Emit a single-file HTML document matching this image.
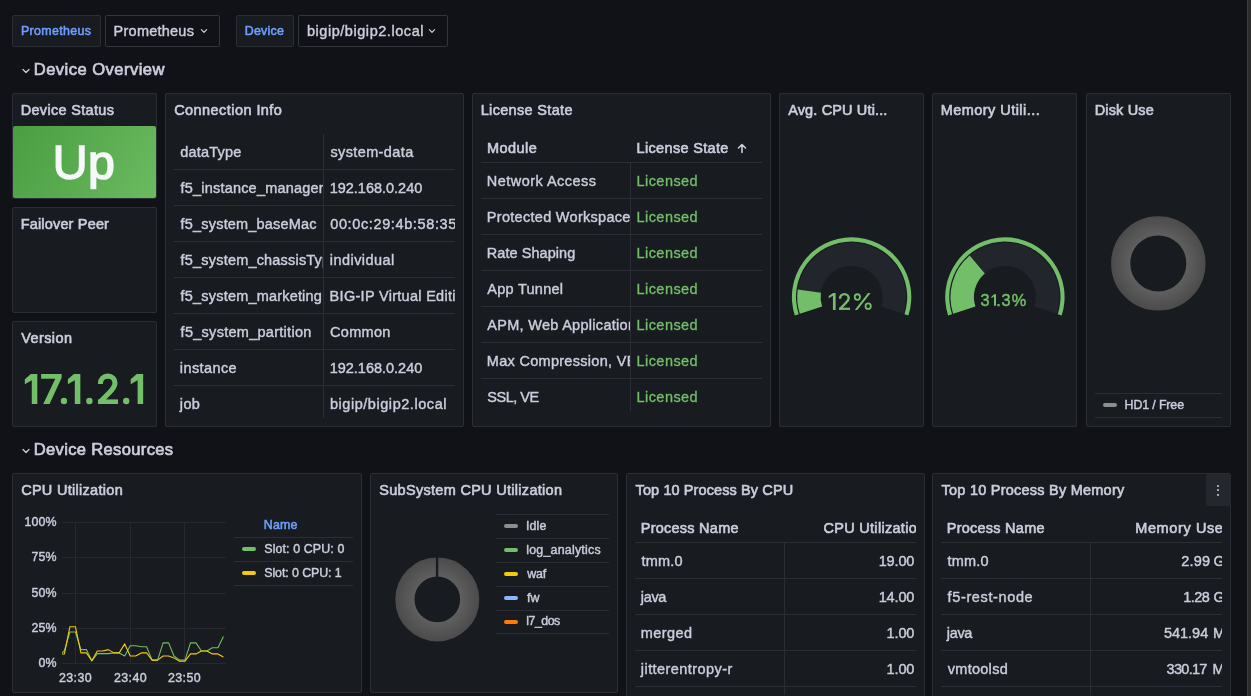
<!DOCTYPE html>
<html><head><meta charset="utf-8"><title>Dashboard</title><style>
html,body{margin:0;padding:0;background:#111217;}body{width:1251px;height:696px;overflow:hidden;position:relative;font-family:"Liberation Sans",sans-serif;color:#ccccdc;}
.a{position:absolute;}.t{position:absolute;white-space:nowrap;line-height:1;}
</style></head><body>
<div class="a" style="left:12px;top:15px;width:89px;height:32px;background:#181b1f;border:1px solid #2c2e35;box-sizing:border-box;border-radius:2px;"></div>
<div class="a" style="left:105px;top:15px;width:115px;height:32px;background:#111217;border:1px solid #33353d;box-sizing:border-box;border-radius:2px;"></div>
<div class="a" style="left:236px;top:15px;width:58px;height:32px;background:#181b1f;border:1px solid #2c2e35;box-sizing:border-box;border-radius:2px;"></div>
<div class="a" style="left:298px;top:15px;width:150px;height:32px;background:#111217;border:1px solid #33353d;box-sizing:border-box;border-radius:2px;"></div>
<svg class="a" style="left:198px;top:24.8px" width="12" height="12" viewBox="-6 -6 12 12"><path d="M-2.6 -1.3 L0 1.3 L2.6 -1.3" fill="none" stroke="#ccccdc" stroke-width="1.2" stroke-linecap="round" stroke-linejoin="round"/></svg>
<svg class="a" style="left:426px;top:24.8px" width="12" height="12" viewBox="-6 -6 12 12"><path d="M-2.6 -1.3 L0 1.3 L2.6 -1.3" fill="none" stroke="#ccccdc" stroke-width="1.2" stroke-linecap="round" stroke-linejoin="round"/></svg>
<svg class="a" style="left:20px;top:64.5px" width="12" height="12" viewBox="-6 -6 12 12"><path d="M-3.0 -1.5 L0 1.5 L3.0 -1.5" fill="none" stroke="#ccccdc" stroke-width="1.3" stroke-linecap="round" stroke-linejoin="round"/></svg>
<svg class="a" style="left:20px;top:444.5px" width="12" height="12" viewBox="-6 -6 12 12"><path d="M-3.0 -1.5 L0 1.5 L3.0 -1.5" fill="none" stroke="#ccccdc" stroke-width="1.3" stroke-linecap="round" stroke-linejoin="round"/></svg>
<div class="a" style="left:12px;top:93px;width:145px;height:106px;background:#181b1f;border:1px solid #2c2e35;box-sizing:border-box;border-radius:2px;"></div>
<div class="a" style="left:13px;top:126px;width:143.4px;height:72px;background:linear-gradient(120deg,#4a9e41,#6bba60);border-radius:2px"></div>
<div class="a" style="left:12px;top:207px;width:145px;height:106px;background:#181b1f;border:1px solid #2c2e35;box-sizing:border-box;border-radius:2px;"></div>
<div class="a" style="left:12px;top:321px;width:145px;height:106px;background:#181b1f;border:1px solid #2c2e35;box-sizing:border-box;border-radius:2px;"></div>
<svg class="a" style="left:0;top:0" width="170" height="430" fill="#73bf69"><polygon transform="translate(0,0)" points="30.86,374.03 37.32,374.03 37.32,404.09 31.77,404.09 31.77,380.37 24.83,384.29 24.83,379.16"/><polygon transform="translate(43.03,0)" points="30.86,374.03 37.32,374.03 37.32,404.09 31.77,404.09 31.77,380.37 24.83,384.29 24.83,379.16"/><polygon transform="translate(105.85,0)" points="30.86,374.03 37.32,374.03 37.32,404.09 31.77,404.09 31.77,380.37 24.83,384.29 24.83,379.16"/><polygon points="41.12,374.03 61.64,374.03 61.64,377.66 49.57,404.09 43.23,404.09 55.3,378.86 41.12,378.86"/><circle cx="63.95" cy="401.0" r="3.2"/><circle cx="89.4" cy="401.0" r="3.2"/><circle cx="126.2" cy="401.0" r="3.2"/><g transform="translate(90,368) scale(0.06035)"><clipPath id="c2"><rect x="128" y="80" width="340" height="518"/></clipPath><g clip-path="url(#c2)"><path d="M171 266 C171 185 222 135 295 135 C368 135 414 183 414 248 C414 303 385 340 335 392 L150 580" fill="none" stroke="#73bf69" stroke-width="85"/><rect x="133" y="520" width="332" height="78"/></g></g></svg>
<div class="a" style="left:165px;top:93px;width:299px;height:334px;background:#181b1f;border:1px solid #2c2e35;box-sizing:border-box;border-radius:2px;"></div>
<div class="a" style="left:174px;top:169px;width:281px;height:1px;background:#2c2e35"></div>
<div class="a" style="left:174px;top:205px;width:281px;height:1px;background:#2c2e35"></div>
<div class="a" style="left:174px;top:241px;width:281px;height:1px;background:#2c2e35"></div>
<div class="a" style="left:174px;top:277px;width:281px;height:1px;background:#2c2e35"></div>
<div class="a" style="left:174px;top:313px;width:281px;height:1px;background:#2c2e35"></div>
<div class="a" style="left:174px;top:349px;width:281px;height:1px;background:#2c2e35"></div>
<div class="a" style="left:174px;top:385px;width:281px;height:1px;background:#2c2e35"></div>
<div class="a" style="left:323px;top:134px;width:1px;height:284px;background:#2c2e35"></div>
<div class="a" style="left:472px;top:93px;width:299px;height:334px;background:#181b1f;border:1px solid #2c2e35;box-sizing:border-box;border-radius:2px;"></div>
<svg class="a" style="left:736px;top:141px" width="12" height="14" viewBox="0 0 12 14"><path d="M6 11.4 V3.6 M2.5 7 L6 3.5 L9.5 7" fill="none" stroke="#ccccdc" stroke-width="1.6" stroke-linecap="round" stroke-linejoin="round"/></svg>
<div class="a" style="left:481px;top:162px;width:281px;height:1px;background:#2c2e35"></div>
<div class="a" style="left:481px;top:198px;width:281px;height:1px;background:#2c2e35"></div>
<div class="a" style="left:481px;top:234px;width:281px;height:1px;background:#2c2e35"></div>
<div class="a" style="left:481px;top:270px;width:281px;height:1px;background:#2c2e35"></div>
<div class="a" style="left:481px;top:306px;width:281px;height:1px;background:#2c2e35"></div>
<div class="a" style="left:481px;top:342px;width:281px;height:1px;background:#2c2e35"></div>
<div class="a" style="left:481px;top:378px;width:281px;height:1px;background:#2c2e35"></div>
<div class="a" style="left:630px;top:162px;width:1px;height:249px;background:#2c2e35"></div>
<div class="a" style="left:779px;top:93px;width:145px;height:334px;background:#181b1f;border:1px solid #2c2e35;box-sizing:border-box;border-radius:2px;"></div>
<svg class="a" style="left:0;top:0" width="1251" height="696"><path d="M794.82 315.45 A59.7 59.7 0 1 1 908.38 315.45 L904.48 314.18 A55.6 55.6 0 1 0 798.72 314.18 Z" fill="#73bf69"/><path d="M799.86 313.81 A54.4 54.4 0 1 1 903.34 313.81 L881.08 306.58 A31 31 0 1 0 822.12 306.58 Z" fill="#22252b"/><path d="M799.86 313.81 A54.4 54.4 0 0 1 797.72 289.50 L820.90 292.73 A31 31 0 0 0 822.12 306.58 Z" fill="#73bf69"/></svg>
<svg class="a" style="left:0;top:0" width="1251" height="696"><g transform="translate(820,280) scale(0.05747)" fill="#73bf69"><polygon points="228,228 272,228 272,520 225,520 225,275 152,318 152,280"/></g></svg>
<svg class="a" style="left:0;top:0" width="1251" height="696"><g transform="translate(834.553,289.809) scale(0.03357)"><clipPath id="ct36"><rect x="128" y="80" width="340" height="518"/></clipPath><g clip-path="url(#ct36)"><path d="M164 266 C164 185 222 129 295 129 C368 129 421 183 421 248 C421 303 385 340 335 392 L150 580" fill="none" stroke="#73bf69" stroke-width="72"/><rect x="133" y="531.76" width="332" height="66.24000000000001" fill="#73bf69"/></g></g><g transform="translate(820,280) scale(0.05747)" fill="none" stroke="#73bf69" stroke-width="31"><ellipse cx="650" cy="297" rx="46" ry="49"/><ellipse cx="838" cy="455" rx="46" ry="49"/><clipPath id="cs"><rect x="560" y="228" width="380" height="292"/></clipPath><line x1="863" y1="218" x2="622" y2="530" stroke-width="34" clip-path="url(#cs)"/></g></svg>
<div class="a" style="left:932px;top:93px;width:145px;height:334px;background:#181b1f;border:1px solid #2c2e35;box-sizing:border-box;border-radius:2px;"></div>
<svg class="a" style="left:0;top:0" width="1251" height="696"><path d="M948.12 315.45 A59.7 59.7 0 1 1 1061.68 315.45 L1057.78 314.18 A55.6 55.6 0 1 0 952.02 314.18 Z" fill="#73bf69"/><path d="M953.16 313.81 A54.4 54.4 0 1 1 1056.64 313.81 L1034.38 306.58 A31 31 0 1 0 975.42 306.58 Z" fill="#22252b"/><path d="M953.16 313.81 A54.4 54.4 0 0 1 969.65 255.57 L984.81 273.39 A31 31 0 0 0 975.42 306.58 Z" fill="#73bf69"/></svg>
<svg class="a" style="left:0;top:0" width="1251" height="696"><g transform="translate(973,280) scale(0.05747)" fill="#73bf69"><polygon points="368,248 400,248 400,450 365,450 365,287 320,318 320,290"/></g></svg>
<div class="a" style="left:1086px;top:93px;width:145px;height:334px;background:#181b1f;border:1px solid #2c2e35;box-sizing:border-box;border-radius:2px;"></div>
<svg class="a" style="left:0;top:0" width="1251" height="696"><defs><radialGradient id="gd" gradientUnits="userSpaceOnUse" cx="1158.3" cy="263.4" r="47.2"><stop offset="0.59" stop-color="#5f5f5f"/><stop offset="1" stop-color="#4b4b4b"/></radialGradient></defs><circle cx="1158.3" cy="263.4" r="37.6" fill="none" stroke="url(#gd)" stroke-width="19.2"/></svg>
<div class="a" style="left:1095px;top:393px;width:127px;height:1px;background:#2c2e35"></div>
<div class="a" style="left:1095px;top:417px;width:127px;height:1px;background:#2c2e35"></div>
<div class="a" style="left:1102.8px;top:403px;width:14px;height:4px;background:#8e8e8e;border-radius:2px;"></div>
<div class="a" style="left:12px;top:473px;width:350px;height:220px;background:#181b1f;border:1px solid #2c2e35;box-sizing:border-box;border-radius:2px;"></div>
<div class="a" style="left:370px;top:473px;width:248px;height:220px;background:#181b1f;border:1px solid #2c2e35;box-sizing:border-box;border-radius:2px;"></div>
<div class="a" style="left:626px;top:473px;width:299px;height:240px;background:#181b1f;border:1px solid #2c2e35;box-sizing:border-box;border-radius:2px;"></div>
<div class="a" style="left:932px;top:473px;width:299px;height:240px;background:#181b1f;border:1px solid #2c2e35;box-sizing:border-box;border-radius:2px;"></div>
<div class="a" style="left:62px;top:522px;width:164px;height:1px;background:#27292f"></div>
<div class="a" style="left:62px;top:557px;width:164px;height:1px;background:#27292f"></div>
<div class="a" style="left:62px;top:593px;width:164px;height:1px;background:#27292f"></div>
<div class="a" style="left:62px;top:628px;width:164px;height:1px;background:#27292f"></div>
<div class="a" style="left:62px;top:663px;width:164px;height:1px;background:#27292f"></div>
<div class="a" style="left:75px;top:522px;width:1px;height:141px;background:#27292f"></div>
<div class="a" style="left:130px;top:522px;width:1px;height:141px;background:#27292f"></div>
<div class="a" style="left:184px;top:522px;width:1px;height:141px;background:#27292f"></div>
<svg class="a" style="left:62px;top:515px" width="164" height="155" viewBox="62 515 164 155"><polyline points="59.0,655.6 64.4,650.6 69.9,632.0 75.4,632.0 80.9,649.6 86.4,649.6 91.8,660.8 97.3,653.6 102.8,653.6 108.3,653.6 113.8,652.9 119.2,652.9 124.7,656.0 130.2,645.7 135.7,645.7 141.2,646.7 146.6,646.7 152.1,660.1 157.6,660.1 163.1,642.9 168.6,642.9 174.0,656.0 179.5,660.1 185.0,660.1 190.5,642.9 196.0,642.9 201.4,651.0 206.9,651.0 212.4,647.8 217.9,647.8 223.4,636.5" fill="none" stroke="#73bf69" stroke-width="1.1" stroke-linejoin="round"/><polyline points="59.0,654.1 64.4,653.9 69.9,626.7 75.4,626.7 80.9,652.9 86.4,652.9 91.8,660.8 97.3,651.0 102.8,651.0 108.3,649.6 113.8,652.9 119.2,652.9 124.7,643.9 130.2,656.0 135.7,656.0 141.2,652.9 146.6,652.9 152.1,660.1 157.6,660.1 163.1,656.0 168.6,656.0 174.0,657.9 179.5,661.2 185.0,661.2 190.5,653.9 196.0,653.9 201.4,651.0 206.9,651.0 212.4,653.9 217.9,653.9 223.4,657.1" fill="none" stroke="#f2cc0c" stroke-width="1.1" stroke-linejoin="round"/></svg>
<div class="a" style="left:234px;top:537px;width:119px;height:1px;background:#2c2e35"></div>
<div class="a" style="left:242px;top:547px;width:14px;height:4px;background:#73bf69;border-radius:2px;"></div>
<div class="a" style="left:234px;top:561px;width:119px;height:1px;background:#2c2e35"></div>
<div class="a" style="left:242px;top:571px;width:14px;height:4px;background:#f2cc0c;border-radius:2px;"></div>
<div class="a" style="left:234px;top:585px;width:119px;height:1px;background:#2c2e35"></div>
<svg class="a" style="left:0;top:0" width="1251" height="696"><defs><radialGradient id="gs" gradientUnits="userSpaceOnUse" cx="437.3" cy="599.4" r="42"><stop offset="0.54" stop-color="#5f5f5f"/><stop offset="1" stop-color="#4b4b4b"/></radialGradient></defs><circle cx="437.3" cy="599.4" r="32.4" fill="none" stroke="url(#gs)" stroke-width="19.2"/><line x1="437.1" y1="556" x2="437.1" y2="577.3" stroke="#181b1f" stroke-width="2.4" stroke-linecap="round"/></svg>
<div class="a" style="left:496px;top:514px;width:113px;height:1px;background:#2c2e35"></div>
<div class="a" style="left:504px;top:524px;width:14px;height:4px;background:#8e8e8e;border-radius:2px;"></div>
<div class="a" style="left:496px;top:538px;width:113px;height:1px;background:#2c2e35"></div>
<div class="a" style="left:504px;top:548px;width:14px;height:4px;background:#73bf69;border-radius:2px;"></div>
<div class="a" style="left:496px;top:562px;width:113px;height:1px;background:#2c2e35"></div>
<div class="a" style="left:504px;top:572px;width:14px;height:4px;background:#f2cc0c;border-radius:2px;"></div>
<div class="a" style="left:496px;top:586px;width:113px;height:1px;background:#2c2e35"></div>
<div class="a" style="left:504px;top:596px;width:14px;height:4px;background:#8ab8ff;border-radius:2px;"></div>
<div class="a" style="left:496px;top:610px;width:113px;height:1px;background:#2c2e35"></div>
<div class="a" style="left:504px;top:620px;width:14px;height:4px;background:#ff780a;border-radius:2px;"></div>
<div class="a" style="left:496px;top:633px;width:113px;height:1px;background:#2c2e35"></div>
<div class="a" style="left:635px;top:542px;width:281px;height:1px;background:#2c2e35"></div>
<div class="a" style="left:635px;top:578px;width:281px;height:1px;background:#2c2e35"></div>
<div class="a" style="left:635px;top:614px;width:281px;height:1px;background:#2c2e35"></div>
<div class="a" style="left:635px;top:650px;width:281px;height:1px;background:#2c2e35"></div>
<div class="a" style="left:635px;top:686px;width:281px;height:1px;background:#2c2e35"></div>
<div class="a" style="left:784px;top:542px;width:1px;height:153px;background:#2c2e35"></div>
<div class="a" style="left:941px;top:542px;width:281px;height:1px;background:#2c2e35"></div>
<div class="a" style="left:941px;top:578px;width:281px;height:1px;background:#2c2e35"></div>
<div class="a" style="left:941px;top:614px;width:281px;height:1px;background:#2c2e35"></div>
<div class="a" style="left:941px;top:650px;width:281px;height:1px;background:#2c2e35"></div>
<div class="a" style="left:941px;top:686px;width:281px;height:1px;background:#2c2e35"></div>
<div class="a" style="left:1090px;top:542px;width:1px;height:153px;background:#2c2e35"></div>
<div class="a" style="left:1206px;top:474px;width:25px;height:32px;background:#24272d;border-radius:2px;"></div>
<div class="a" style="left:1217px;top:484.5px;width:2.2px;height:2.2px;border-radius:1.1px;background:#ccccdc"></div>
<div class="a" style="left:1217px;top:489.0px;width:2.2px;height:2.2px;border-radius:1.1px;background:#ccccdc"></div>
<div class="a" style="left:1217px;top:493.5px;width:2.2px;height:2.2px;border-radius:1.1px;background:#ccccdc"></div>
<div class="a" style="left:1247px;top:0;width:1px;height:696px;background:#3d3d3d"></div>
<div class="a" style="left:1248px;top:0;width:3px;height:696px;background:#2c2c2c"></div>
<div class="a" style="left:0;top:0;width:1251px;height:696px;will-change:transform">
<span class="t" style="left:20.96px;top:24.79px;font-size:12.42px;color:#6e9fff;-webkit-text-stroke:0.55px #6e9fff;letter-spacing:0.336px;">Prometheus</span>
<span class="t" style="left:113.62px;top:23.75px;font-size:14.49px;color:#ccccdc;-webkit-text-stroke:0.42px #ccccdc;letter-spacing:0.244px;">Prometheus</span>
<span class="t" style="left:244.66px;top:24.79px;font-size:12.42px;color:#6e9fff;-webkit-text-stroke:0.55px #6e9fff;letter-spacing:0.280px;">Device</span>
<span class="t" style="left:306.88px;top:23.75px;font-size:14.49px;color:#ccccdc;-webkit-text-stroke:0.42px #ccccdc;letter-spacing:0.558px;">bigip/bigip2.local</span>
<span class="t" style="left:33.79px;top:62.12px;font-size:16.56px;color:#ccccdc;-webkit-text-stroke:0.7px #ccccdc;letter-spacing:0.463px;">Device Overview</span>
<span class="t" style="left:33.79px;top:442.12px;font-size:16.56px;color:#ccccdc;-webkit-text-stroke:0.7px #ccccdc;letter-spacing:0.333px;">Device Resources</span>
<span class="t" style="left:20.72px;top:102.75px;font-size:14.49px;color:#ccccdc;-webkit-text-stroke:0.62px #ccccdc;letter-spacing:0.319px;">Device Status</span>
<span class="t" style="left:52.48px;top:138.00px;font-size:48.9px;color:#f7f8fa;-webkit-text-stroke:1.3px #f7f8fa;">U</span>
<span class="t" style="left:88.09px;top:138.00px;font-size:48.2px;color:#f7f8fa;-webkit-text-stroke:1.6px #f7f8fa;clip-path:inset(0 -5px -3px -5px);">p</span>
<span class="t" style="left:20.72px;top:216.75px;font-size:14.49px;color:#ccccdc;-webkit-text-stroke:0.62px #ccccdc;letter-spacing:0.173px;">Failover Peer</span>
<span class="t" style="left:21.15px;top:330.75px;font-size:14.49px;color:#ccccdc;-webkit-text-stroke:0.62px #ccccdc;letter-spacing:0.429px;">Version</span>
<span class="t" style="left:174.17px;top:102.75px;font-size:14.49px;color:#ccccdc;-webkit-text-stroke:0.62px #ccccdc;letter-spacing:0.447px;">Connection Info</span>
<div class="a" style="left:0;top:0;height:696px;overflow:hidden;width:323.00px"><span class="t" style="left:180.20px;top:145.06px;font-size:14.49px;color:#ccccdc;-webkit-text-stroke:0.42px #ccccdc;letter-spacing:0.206px;">dataType</span></div>
<div class="a" style="left:0;top:0;height:696px;overflow:hidden;width:455.00px"><span class="t" style="left:330.41px;top:145.06px;font-size:14.49px;color:#ccccdc;-webkit-text-stroke:0.42px #ccccdc;letter-spacing:0.390px;">system-data</span></div>
<div class="a" style="left:0;top:0;height:696px;overflow:hidden;width:323.00px"><span class="t" style="left:180.60px;top:181.06px;font-size:14.49px;color:#ccccdc;-webkit-text-stroke:0.42px #ccccdc;letter-spacing:0.200px;">f5_instance_manager</span></div>
<div class="a" style="left:0;top:0;height:696px;overflow:hidden;width:455.00px"><span class="t" style="left:329.71px;top:181.06px;font-size:14.49px;color:#ccccdc;-webkit-text-stroke:0.42px #ccccdc;letter-spacing:-0.007px;">192.168.0.240</span></div>
<div class="a" style="left:0;top:0;height:696px;overflow:hidden;width:323.00px"><span class="t" style="left:180.60px;top:217.06px;font-size:14.49px;color:#ccccdc;-webkit-text-stroke:0.42px #ccccdc;letter-spacing:0.196px;">f5_system_baseMac</span></div>
<div class="a" style="left:0;top:0;height:696px;overflow:hidden;width:455.00px"><span class="t" style="left:330.24px;top:217.06px;font-size:14.49px;color:#ccccdc;-webkit-text-stroke:0.42px #ccccdc;letter-spacing:0.630px;">00:0c:29:4b:58:35</span></div>
<div class="a" style="left:0;top:0;height:696px;overflow:hidden;width:323.00px"><span class="t" style="left:180.60px;top:253.06px;font-size:14.49px;color:#ccccdc;-webkit-text-stroke:0.42px #ccccdc;letter-spacing:0.200px;">f5_system_chassisType</span></div>
<div class="a" style="left:0;top:0;height:696px;overflow:hidden;width:455.00px"><span class="t" style="left:329.84px;top:253.06px;font-size:14.49px;color:#ccccdc;-webkit-text-stroke:0.42px #ccccdc;letter-spacing:0.447px;">individual</span></div>
<div class="a" style="left:0;top:0;height:696px;overflow:hidden;width:323.00px"><span class="t" style="left:180.60px;top:289.06px;font-size:14.49px;color:#ccccdc;-webkit-text-stroke:0.42px #ccccdc;letter-spacing:0.200px;">f5_system_marketingName</span></div>
<div class="a" style="left:0;top:0;height:696px;overflow:hidden;width:455.00px"><span class="t" style="left:329.62px;top:289.06px;font-size:14.49px;color:#ccccdc;-webkit-text-stroke:0.42px #ccccdc;letter-spacing:0.300px;">BIG-IP Virtual Edition</span></div>
<div class="a" style="left:0;top:0;height:696px;overflow:hidden;width:323.00px"><span class="t" style="left:180.60px;top:325.06px;font-size:14.49px;color:#ccccdc;-webkit-text-stroke:0.42px #ccccdc;letter-spacing:0.285px;">f5_system_partition</span></div>
<div class="a" style="left:0;top:0;height:696px;overflow:hidden;width:455.00px"><span class="t" style="left:330.07px;top:325.06px;font-size:14.49px;color:#ccccdc;-webkit-text-stroke:0.42px #ccccdc;letter-spacing:0.320px;">Common</span></div>
<div class="a" style="left:0;top:0;height:696px;overflow:hidden;width:323.00px"><span class="t" style="left:179.84px;top:361.06px;font-size:14.49px;color:#ccccdc;-webkit-text-stroke:0.42px #ccccdc;letter-spacing:0.406px;">instance</span></div>
<div class="a" style="left:0;top:0;height:696px;overflow:hidden;width:455.00px"><span class="t" style="left:329.71px;top:361.06px;font-size:14.49px;color:#ccccdc;-webkit-text-stroke:0.42px #ccccdc;letter-spacing:-0.007px;">192.168.0.240</span></div>
<div class="a" style="left:0;top:0;height:696px;overflow:hidden;width:323.00px"><span class="t" style="left:179.86px;top:397.06px;font-size:14.49px;color:#ccccdc;-webkit-text-stroke:0.42px #ccccdc;letter-spacing:0.303px;">job</span></div>
<div class="a" style="left:0;top:0;height:696px;overflow:hidden;width:455.00px"><span class="t" style="left:329.88px;top:397.06px;font-size:14.49px;color:#ccccdc;-webkit-text-stroke:0.42px #ccccdc;letter-spacing:0.558px;">bigip/bigip2.local</span></div>
<span class="t" style="left:480.72px;top:102.75px;font-size:14.49px;color:#ccccdc;-webkit-text-stroke:0.62px #ccccdc;letter-spacing:0.329px;">License State</span>
<span class="t" style="left:486.92px;top:140.75px;font-size:14.49px;color:#ccccdc;-webkit-text-stroke:0.62px #ccccdc;letter-spacing:0.481px;">Module</span>
<span class="t" style="left:636.62px;top:140.75px;font-size:14.49px;color:#ccccdc;-webkit-text-stroke:0.62px #ccccdc;letter-spacing:0.329px;">License State</span>
<div class="a" style="left:0;top:0;height:696px;overflow:hidden;width:630.00px"><span class="t" style="left:486.82px;top:174.06px;font-size:14.49px;color:#ccccdc;-webkit-text-stroke:0.42px #ccccdc;letter-spacing:0.466px;">Network Access</span></div>
<span class="t" style="left:636.46px;top:174.06px;font-size:14.49px;color:#73bf69;-webkit-text-stroke:0.3px #73bf69;letter-spacing:0.463px;">Licensed</span>
<div class="a" style="left:0;top:0;height:696px;overflow:hidden;width:630.00px"><span class="t" style="left:486.82px;top:210.06px;font-size:14.49px;color:#ccccdc;-webkit-text-stroke:0.42px #ccccdc;letter-spacing:0.300px;">Protected Workspace</span></div>
<span class="t" style="left:636.46px;top:210.06px;font-size:14.49px;color:#73bf69;-webkit-text-stroke:0.3px #73bf69;letter-spacing:0.463px;">Licensed</span>
<div class="a" style="left:0;top:0;height:696px;overflow:hidden;width:630.00px"><span class="t" style="left:486.82px;top:246.06px;font-size:14.49px;color:#ccccdc;-webkit-text-stroke:0.42px #ccccdc;letter-spacing:0.057px;">Rate Shaping</span></div>
<span class="t" style="left:636.46px;top:246.06px;font-size:14.49px;color:#73bf69;-webkit-text-stroke:0.3px #73bf69;letter-spacing:0.463px;">Licensed</span>
<div class="a" style="left:0;top:0;height:696px;overflow:hidden;width:630.00px"><span class="t" style="left:487.28px;top:282.06px;font-size:14.49px;color:#ccccdc;-webkit-text-stroke:0.42px #ccccdc;letter-spacing:0.281px;">App Tunnel</span></div>
<span class="t" style="left:636.46px;top:282.06px;font-size:14.49px;color:#73bf69;-webkit-text-stroke:0.3px #73bf69;letter-spacing:0.463px;">Licensed</span>
<div class="a" style="left:0;top:0;height:696px;overflow:hidden;width:630.00px"><span class="t" style="left:487.28px;top:318.06px;font-size:14.49px;color:#ccccdc;-webkit-text-stroke:0.42px #ccccdc;letter-spacing:0.300px;">APM, Web Application</span></div>
<span class="t" style="left:636.46px;top:318.06px;font-size:14.49px;color:#73bf69;-webkit-text-stroke:0.3px #73bf69;letter-spacing:0.463px;">Licensed</span>
<div class="a" style="left:0;top:0;height:696px;overflow:hidden;width:630.00px"><span class="t" style="left:486.82px;top:354.06px;font-size:14.49px;color:#ccccdc;-webkit-text-stroke:0.42px #ccccdc;letter-spacing:0.300px;">Max Compression, VE</span></div>
<span class="t" style="left:636.46px;top:354.06px;font-size:14.49px;color:#73bf69;-webkit-text-stroke:0.3px #73bf69;letter-spacing:0.463px;">Licensed</span>
<div class="a" style="left:0;top:0;height:696px;overflow:hidden;width:630.00px"><span class="t" style="left:487.35px;top:390.06px;font-size:14.49px;color:#ccccdc;-webkit-text-stroke:0.42px #ccccdc;letter-spacing:-0.481px;">SSL, VE</span></div>
<span class="t" style="left:636.46px;top:390.06px;font-size:14.49px;color:#73bf69;-webkit-text-stroke:0.3px #73bf69;letter-spacing:0.463px;">Licensed</span>
<span class="t" style="left:788.18px;top:102.75px;font-size:14.49px;color:#ccccdc;-webkit-text-stroke:0.62px #ccccdc;letter-spacing:0.150px;">Avg. CPU Uti...</span>
<span class="t" style="left:940.72px;top:102.75px;font-size:14.49px;color:#ccccdc;-webkit-text-stroke:0.62px #ccccdc;letter-spacing:0.461px;">Memory Utili...</span>
<span class="t" style="left:980.40px;top:292.15px;font-size:16.3px;color:#73bf69;-webkit-text-stroke:0.45px #73bf69;">3</span>
<span class="t" style="left:996.34px;top:292.15px;font-size:16.3px;color:#73bf69;-webkit-text-stroke:0.45px #73bf69;">.</span>
<span class="t" style="left:1001.40px;top:292.15px;font-size:16.3px;color:#73bf69;-webkit-text-stroke:0.45px #73bf69;">3</span>
<span class="t" style="left:1011.74px;top:292.15px;font-size:16.3px;color:#73bf69;-webkit-text-stroke:0.45px #73bf69;">%</span>
<span class="t" style="left:1094.72px;top:102.75px;font-size:14.49px;color:#ccccdc;-webkit-text-stroke:0.62px #ccccdc;letter-spacing:0.153px;">Disk Use</span>
<span class="t" style="left:1124.59px;top:398.79px;font-size:12.42px;color:#ccccdc;-webkit-text-stroke:0.42px #ccccdc;letter-spacing:-0.135px;">HD1 / Free</span>
<span class="t" style="left:21.17px;top:482.75px;font-size:14.49px;color:#ccccdc;-webkit-text-stroke:0.62px #ccccdc;letter-spacing:0.297px;">CPU Utilization</span>
<span class="t" style="left:379.25px;top:482.75px;font-size:14.49px;color:#ccccdc;-webkit-text-stroke:0.62px #ccccdc;letter-spacing:0.304px;">SubSystem CPU Utilization</span>
<span class="t" style="left:635.58px;top:482.75px;font-size:14.49px;color:#ccccdc;-webkit-text-stroke:0.62px #ccccdc;letter-spacing:0.108px;">Top 10 Process By CPU</span>
<span class="t" style="left:941.58px;top:482.75px;font-size:14.49px;color:#ccccdc;-webkit-text-stroke:0.62px #ccccdc;letter-spacing:0.241px;">Top 10 Process By Memory</span>
<span class="t" style="left:24.50px;top:516.09px;font-size:12.42px;color:#ccccdc;-webkit-text-stroke:0.42px #ccccdc;letter-spacing:0.100px;">100%</span>
<span class="t" style="left:31.50px;top:551.49px;font-size:12.42px;color:#ccccdc;-webkit-text-stroke:0.42px #ccccdc;letter-spacing:0.100px;">75%</span>
<span class="t" style="left:31.50px;top:586.99px;font-size:12.42px;color:#ccccdc;-webkit-text-stroke:0.42px #ccccdc;letter-spacing:0.100px;">50%</span>
<span class="t" style="left:31.50px;top:622.19px;font-size:12.42px;color:#ccccdc;-webkit-text-stroke:0.42px #ccccdc;letter-spacing:0.100px;">25%</span>
<span class="t" style="left:38.50px;top:657.39px;font-size:12.42px;color:#ccccdc;-webkit-text-stroke:0.42px #ccccdc;letter-spacing:0.100px;">0%</span>
<span class="t" style="left:59.11px;top:672.19px;font-size:12.42px;color:#ccccdc;-webkit-text-stroke:0.42px #ccccdc;letter-spacing:0.350px;">23:30</span>
<span class="t" style="left:114.11px;top:672.19px;font-size:12.42px;color:#ccccdc;-webkit-text-stroke:0.42px #ccccdc;letter-spacing:0.350px;">23:40</span>
<span class="t" style="left:168.11px;top:672.19px;font-size:12.42px;color:#ccccdc;-webkit-text-stroke:0.42px #ccccdc;letter-spacing:0.350px;">23:50</span>
<span class="t" style="left:263.86px;top:519.29px;font-size:12.42px;color:#6e9fff;-webkit-text-stroke:0.55px #6e9fff;letter-spacing:0.176px;">Name</span>
<span class="t" style="left:264.25px;top:542.79px;font-size:12.42px;color:#ccccdc;-webkit-text-stroke:0.42px #ccccdc;letter-spacing:0.110px;">Slot: 0 CPU: 0</span>
<span class="t" style="left:264.25px;top:566.79px;font-size:12.42px;color:#ccccdc;-webkit-text-stroke:0.42px #ccccdc;letter-spacing:-0.089px;">Slot: 0 CPU: 1</span>
<span class="t" style="left:525.96px;top:520.00px;font-size:12.42px;color:#ccccdc;-webkit-text-stroke:0.42px #ccccdc;letter-spacing:0.158px;">Idle</span>
<span class="t" style="left:526.27px;top:544.00px;font-size:12.42px;color:#ccccdc;-webkit-text-stroke:0.42px #ccccdc;letter-spacing:0.220px;">log_analytics</span>
<span class="t" style="left:527.13px;top:568.00px;font-size:12.42px;color:#ccccdc;-webkit-text-stroke:0.42px #ccccdc;letter-spacing:-0.081px;">waf</span>
<span class="t" style="left:526.93px;top:592.00px;font-size:12.42px;color:#ccccdc;-webkit-text-stroke:0.42px #ccccdc;letter-spacing:0.119px;">fw</span>
<span class="t" style="left:526.27px;top:615.00px;font-size:12.42px;color:#ccccdc;-webkit-text-stroke:0.42px #ccccdc;letter-spacing:-0.519px;">l7_dos</span>
<span class="t" style="left:640.72px;top:520.75px;font-size:14.49px;color:#ccccdc;-webkit-text-stroke:0.62px #ccccdc;letter-spacing:0.257px;">Process Name</span>
<div class="a" style="left:0;top:0;height:696px;overflow:hidden;width:916.00px"><span class="t" style="left:823.47px;top:520.75px;font-size:14.49px;color:#ccccdc;-webkit-text-stroke:0.62px #ccccdc;letter-spacing:0.300px;">CPU Utilization</span></div>
<span class="t" style="left:641.59px;top:554.00px;font-size:14.49px;color:#ccccdc;-webkit-text-stroke:0.42px #ccccdc;letter-spacing:0.183px;">tmm.0</span>
<span class="t" style="left:878.71px;top:554.00px;font-size:14.49px;color:#ccccdc;-webkit-text-stroke:0.42px #ccccdc;letter-spacing:-0.150px;">19.00</span>
<span class="t" style="left:640.86px;top:590.00px;font-size:14.49px;color:#ccccdc;-webkit-text-stroke:0.42px #ccccdc;letter-spacing:-0.348px;">java</span>
<span class="t" style="left:878.71px;top:590.00px;font-size:14.49px;color:#ccccdc;-webkit-text-stroke:0.42px #ccccdc;letter-spacing:-0.150px;">14.00</span>
<span class="t" style="left:640.85px;top:626.00px;font-size:14.49px;color:#ccccdc;-webkit-text-stroke:0.42px #ccccdc;letter-spacing:0.413px;">merged</span>
<span class="t" style="left:886.62px;top:626.00px;font-size:14.49px;color:#ccccdc;-webkit-text-stroke:0.42px #ccccdc;letter-spacing:-0.150px;">1.00</span>
<span class="t" style="left:640.86px;top:662.00px;font-size:14.49px;color:#ccccdc;-webkit-text-stroke:0.42px #ccccdc;letter-spacing:0.432px;">jitterentropy-r</span>
<span class="t" style="left:886.62px;top:662.00px;font-size:14.49px;color:#ccccdc;-webkit-text-stroke:0.42px #ccccdc;letter-spacing:-0.150px;">1.00</span>
<span class="t" style="left:946.72px;top:520.75px;font-size:14.49px;color:#ccccdc;-webkit-text-stroke:0.62px #ccccdc;letter-spacing:0.257px;">Process Name</span>
<div class="a" style="left:0;top:0;height:696px;overflow:hidden;width:1222.00px"><span class="t" style="left:1135.22px;top:520.75px;font-size:14.49px;color:#ccccdc;-webkit-text-stroke:0.62px #ccccdc;letter-spacing:0.620px;">Memory Use</span></div>
<span class="t" style="left:947.59px;top:554.00px;font-size:14.49px;color:#ccccdc;-webkit-text-stroke:0.42px #ccccdc;letter-spacing:0.183px;">tmm.0</span>
<span class="t" style="left:1181.28px;top:554.00px;font-size:14.49px;color:#ccccdc;-webkit-text-stroke:0.42px #ccccdc;letter-spacing:0.168px;">2.99</span>
<div class="a" style="left:0;top:0;height:696px;overflow:hidden;width:1222.00px"><span class="t" style="left:1213.48px;top:554.00px;font-size:14.49px;color:#ccccdc;-webkit-text-stroke:0.42px #ccccdc;">GB</span></div>
<span class="t" style="left:947.60px;top:590.00px;font-size:14.49px;color:#ccccdc;-webkit-text-stroke:0.42px #ccccdc;letter-spacing:0.630px;">f5-rest-node</span>
<span class="t" style="left:1183.31px;top:590.00px;font-size:14.49px;color:#ccccdc;-webkit-text-stroke:0.42px #ccccdc;letter-spacing:-0.526px;">1.28</span>
<div class="a" style="left:0;top:0;height:696px;overflow:hidden;width:1222.00px"><span class="t" style="left:1213.48px;top:590.00px;font-size:14.49px;color:#ccccdc;-webkit-text-stroke:0.42px #ccccdc;">GB</span></div>
<span class="t" style="left:946.86px;top:626.00px;font-size:14.49px;color:#ccccdc;-webkit-text-stroke:0.42px #ccccdc;letter-spacing:-0.348px;">java</span>
<span class="t" style="left:1163.93px;top:626.00px;font-size:14.49px;color:#ccccdc;-webkit-text-stroke:0.42px #ccccdc;letter-spacing:-0.003px;">541.94</span>
<div class="a" style="left:0;top:0;height:696px;overflow:hidden;width:1222.00px"><span class="t" style="left:1212.92px;top:626.00px;font-size:14.49px;color:#ccccdc;-webkit-text-stroke:0.42px #ccccdc;">MB</span></div>
<span class="t" style="left:947.76px;top:662.00px;font-size:14.49px;color:#ccccdc;-webkit-text-stroke:0.42px #ccccdc;letter-spacing:0.286px;">vmtoolsd</span>
<span class="t" style="left:1166.56px;top:662.00px;font-size:14.49px;color:#ccccdc;-webkit-text-stroke:0.42px #ccccdc;letter-spacing:-0.688px;">330.17</span>
<div class="a" style="left:0;top:0;height:696px;overflow:hidden;width:1222.00px"><span class="t" style="left:1212.42px;top:662.00px;font-size:14.49px;color:#ccccdc;-webkit-text-stroke:0.42px #ccccdc;">MB</span></div>
</div>
</body></html>
